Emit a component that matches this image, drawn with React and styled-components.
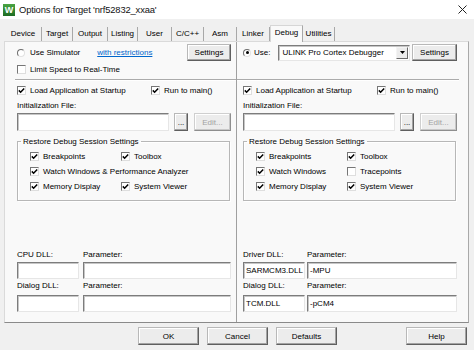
import React from 'react';
import styled, { createGlobalStyle } from 'styled-components';

const GlobalStyle = createGlobalStyle`
  html, body {
    margin: 0;
    padding: 0;
    background: #f0f0f0;
  }
  body {
    font-family: "Liberation Sans", Arial, sans-serif;
    font-size: 8px;
    color: #000;
  }
`;

const Window = styled.div`
  width: 474px;
  height: 350px;
  background: #f0f0f0;
  display: flex;
  flex-direction: column;
  overflow: hidden;
`;

const TitleBar = styled.div`
  flex: none;
  height: 19px;
  background: #fff;
  display: flex;
  align-items: center;
  padding: 0 7px 0 3px;
`;

const AppIcon = styled.div`
  width: 12px;
  height: 12px;
  margin-right: 4px;
  background: linear-gradient(#4aa544, #1d6b22);
  color: #fff;
  font-weight: bold;
  font-size: 9px;
  line-height: 12px;
  text-align: center;
`;

const Title = styled.span`
  font-size: 9.4px;
  letter-spacing: -0.15px;
  color: #111;
`;

const Close = styled.svg`
  margin-left: auto;
`;

const TabStrip = styled.div`
  flex: none;
  height: 22px;
  display: flex;
  align-items: flex-end;
  padding-left: 5px;
`;

const Tab = styled.div`
  width: ${({ w }) => w}px;
  height: ${({ active }) => (active ? 17 : 14)}px;
  box-sizing: border-box;
  display: flex;
  align-items: center;
  justify-content: center;
  padding-bottom: ${({ active }) => (active ? 3 : 1)}px;
  border-right: 1px solid ${({ active }) => (active ? '#a8a8a8' : '#a8a8a8')};
  background: ${({ active }) => (active ? '#f9f9f9' : 'transparent')};
  ${({ active }) =>
    active &&
    `
    border-left: 1px solid #d6d6d6;
    border-top: 1px solid #d6d6d6;
    margin-bottom: -1px;
    position: relative;
    z-index: 1;
  `}
`;

const Panel = styled.div`
  flex: none;
  margin-left: 4px;
  width: 465px;
  height: 282px;
  box-sizing: border-box;
  border: 1px solid #dadada;
  border-right-color: #a9a9a9;
  border-bottom-color: #8a8a8a;
  background: #f9f9f9;
  display: flex;
`;

const Column = styled.div`
  width: ${({ w }) => w}px;
  box-sizing: border-box;
  display: flex;
  flex-direction: column;
  padding: 2px ${({ pr }) => pr}px 10px ${({ pl }) => pl}px;
  ${({ divider }) => divider && 'border-left: 1px solid #a0a0a0;'}
`;

const Row = styled.div`
  display: flex;
  align-items: center;
  height: ${({ h }) => h}px;
  margin-top: ${({ mt }) => mt || 0}px;
  margin-right: ${({ mr }) => mr || 0}px;
  white-space: nowrap;
`;

const Separator = styled.div`
  margin: 5px ${({ mr }) => mr}px 0 ${({ ml }) => ml}px;
  border-top: 1px solid #ababab;
  border-bottom: 1px solid #fff;
`;

const Text = styled.span`
  margin-left: ${({ ml }) => ml || 0}px;
  color: ${({ dim }) => (dim ? '#a0a0a0' : '#000')};
  white-space: nowrap;
`;

const LinkText = styled.span`
  margin-left: 17px;
  color: #0066cc;
  text-decoration: underline;
`;

const Button = styled.div`
  width: ${({ w }) => w}px;
  height: ${({ h }) => h || 17}px;
  margin-left: ${({ ml }) => (ml === 'auto' ? 'auto' : `${ml || 0}px`)};
  box-sizing: border-box;
  flex: none;
  display: flex;
  align-items: center;
  justify-content: center;
  background: #ececec;
  border: 1px solid;
  border-color: #b8b8b8 #5f5f5f #5f5f5f #b8b8b8;
  box-shadow: inset -1px -1px 0 #a3a3a3, inset 1px 1px 0 #fff;
  color: ${({ disabled }) => (disabled ? '#a3a3a3' : '#000')};
  ${({ disabled }) =>
    disabled &&
    `
    border-color: #cfcfcf #8e8e8e #8e8e8e #cfcfcf;
    box-shadow: inset -1px -1px 0 #c8c8c8, inset 1px 1px 0 #fff;
  `}
`;

const Field = styled.div`
  height: ${({ h }) => h}px;
  box-sizing: border-box;
  flex: ${({ grow }) => (grow ? '1 1 auto' : 'none')};
  min-width: 0;
  display: flex;
  align-items: center;
  padding-left: 2px;
  background: #fff;
  border: 1px solid;
  border-color: #7c7c7c #e6e6e6 #e6e6e6 #7c7c7c;
  box-shadow: inset 1px 1px 0 #c6c6c6;
  white-space: nowrap;
  overflow: hidden;
`;

const Combo = styled(Field)`
  width: 132px;
  margin-left: 8px;
  padding-left: 3px;
  padding-right: 1px;
  justify-content: space-between;
`;

const ComboArrow = styled.div`
  width: 12px;
  height: 12px;
  box-sizing: border-box;
  display: flex;
  align-items: center;
  justify-content: center;
  background: #ececec;
  border: 1px solid;
  border-color: #f4f4f4 #6a6a6a #6a6a6a #f4f4f4;
`;

const Box = styled.span`
  width: 9px;
  height: 9px;
  box-sizing: border-box;
  flex: none;
  display: flex;
  align-items: center;
  justify-content: center;
  background: #fff;
  border: 1px solid;
  border-color: #767676 #dedede #dedede #767676;
`;

const RadioDot = styled.span`
  width: 8px;
  height: 8px;
  box-sizing: border-box;
  flex: none;
  border-radius: 50%;
  background: #fff;
  border: 1px solid;
  border-color: #6e6e6e #e2e2e2 #e2e2e2 #6e6e6e;
  display: flex;
  align-items: center;
  justify-content: center;
  &::after {
    content: '';
    width: 3px;
    height: 3px;
    border-radius: 50%;
    background: ${({ on }) => (on ? '#000' : 'transparent')};
  }
`;

const CheckItem = styled.div`
  display: flex;
  align-items: center;
  gap: 4px;
  width: ${({ w }) => (w ? `${w}px` : 'auto')};
  white-space: nowrap;
  ${({ span }) => span && 'grid-column: 1 / -1;'}
`;

const Group = styled.fieldset`
  margin: 6px 1px 0 0;
  padding: 0;
  min-width: 0;
  border: 1px solid #b7b7b7;
  box-shadow: inset 1px 1px 0 #fff, 1px 1px 0 #fff;
`;

const Legend = styled.legend`
  margin-left: 3px;
  padding: 0 2px;
  line-height: 9px;
`;

const GroupGrid = styled.div`
  display: grid;
  grid-template-columns: 91px 1fr;
  grid-auto-rows: 15px;
  align-items: center;
  padding: 3px 0 6px 12px;
`;

const DllGrid = styled.div`
  margin-top: auto;
  display: grid;
  grid-template-columns: 62px 1fr;
  grid-template-rows: 10px 17px 12px 17px;
  column-gap: ${({ gap }) => gap}px;
  row-gap: 2px;
`;

const DllLabel = styled.span`
  line-height: 10px;
  align-self: start;
  white-space: nowrap;
`;

const Footer = styled.div`
  flex: none;
  display: flex;
  align-items: center;
  gap: 8px;
  padding: 4px 7px 0 138px;
`;

const CheckMark = () => (
  <svg width="7" height="7" viewBox="0 0 7 7">
    <path d="M0.8 3.4 L2.6 5.2 L6.2 1.4" fill="none" stroke="#000" strokeWidth="1.5" />
  </svg>
);

const Check = ({ label, on, w, span }) => (
  <CheckItem w={w} span={span}>
    <Box>{on && <CheckMark />}</Box>
    <Text>{label}</Text>
  </CheckItem>
);

const tabs = [
  ['Device', 37],
  ['Target', 31],
  ['Output', 35],
  ['Listing', 30],
  ['User', 34],
  ['C/C++', 32],
  ['Asm', 33],
  ['Linker', 33],
  ['Debug', 33],
  ['Utilities', 32],
];

const sides = [
  {
    key: 'sim',
    w: 231,
    pl: 12,
    pr: 5,
    sep: [-2, -5],
    dllGap: 4,
    restore: [
      ['Breakpoints', true],
      ['Toolbox', true],
      ['Watch Windows & Performance Analyzer', true, true],
      ['Memory Display', true],
      ['System Viewer', true],
    ],
    dll: ['CPU DLL:', '', 'Dialog DLL:', ''],
    params: ['', ''],
  },
  {
    key: 'use',
    w: 232,
    pl: 6,
    pr: 11,
    divider: true,
    sep: [-6, -2],
    dllGap: 2,
    restore: [
      ['Breakpoints', true],
      ['Toolbox', true],
      ['Watch Windows', true],
      ['Tracepoints', false],
      ['Memory Display', true],
      ['System Viewer', true],
    ],
    dll: ['Driver DLL:', 'SARMCM3.DLL', 'Dialog DLL:', 'TCM.DLL'],
    params: ['-MPU', '-pCM4'],
  },
];

const TopRow = ({ side }) =>
  side.key === 'sim' ? (
    <Row h={17}>
      <RadioDot />
      <Text ml={5}>Use Simulator</Text>
      <LinkText>with restrictions</LinkText>
      <Button w={44} ml="auto">Settings</Button>
    </Row>
  ) : (
    <Row h={17}>
      <RadioDot on />
      <Text ml={3}>Use:</Text>
      <Combo h={16}>
        <span>ULINK Pro Cortex Debugger</span>
        <ComboArrow>
          <svg width="5" height="3" viewBox="0 0 5 3">
            <path d="M0 0 H5 L2.5 3 Z" fill="#000" />
          </svg>
        </ComboArrow>
      </Combo>
      <Button w={45} ml="auto">Settings</Button>
    </Row>
  );

const Side = ({ side }) => (
  <Column w={side.w} pl={side.pl} pr={side.pr} divider={side.divider}>
    <TopRow side={side} />
    <Row h={10} mt={3}>
      {side.key === 'sim' && <Check label="Limit Speed to Real-Time" />}
    </Row>
    <Separator ml={side.sep[0]} mr={side.sep[1]} />
    <Row h={11} mt={4}>
      <Check label="Load Application at Startup" on w={134} />
      <Check label="Run to main()" on />
    </Row>
    <Row h={10} mt={4}>
      <Text>Initialization File:</Text>
    </Row>
    <Row h={18} mt={3}>
      <Field h={18} grow />
      <Button w={14} h={18} ml={5}>...</Button>
      <Button w={37} h={18} ml={6} disabled>Edit...</Button>
    </Row>
    <Group>
      <Legend>Restore Debug Session Settings</Legend>
      <GroupGrid>
        {side.restore.map(([label, on, span]) => (
          <Check key={label} label={label} on={on} span={span} />
        ))}
      </GroupGrid>
    </Group>
    <DllGrid gap={side.dllGap}>
      <DllLabel>{side.dll[0]}</DllLabel>
      <DllLabel>Parameter:</DllLabel>
      <Field h={17}>{side.dll[1]}</Field>
      <Field h={17}>{side.params[0]}</Field>
      <DllLabel>{side.dll[2]}</DllLabel>
      <DllLabel>Parameter:</DllLabel>
      <Field h={17}>{side.dll[3]}</Field>
      <Field h={17}>{side.params[1]}</Field>
    </DllGrid>
  </Column>
);

const App = () => (
  <>
    <GlobalStyle />
    <Window>
      <TitleBar>
        <AppIcon>W</AppIcon>
        <Title>Options for Target 'nrf52832_xxaa'</Title>
        <Close width="9" height="9" viewBox="0 0 9 9">
          <path d="M0.5 0.5 L8.5 8.5 M8.5 0.5 L0.5 8.5" stroke="#222" strokeWidth="1" />
        </Close>
      </TitleBar>
      <TabStrip>
        {tabs.map(([name, w]) => (
          <Tab key={name} w={w} active={name === 'Debug'}>
            {name}
          </Tab>
        ))}
      </TabStrip>
      <Panel>
        {sides.map((side) => (
          <Side key={side.key} side={side} />
        ))}
      </Panel>
      <Footer>
        <Button w={61} h={18}>OK</Button>
        <Button w={61} h={18}>Cancel</Button>
        <Button w={61} h={18}>Defaults</Button>
        <Button w={61} h={18} ml="auto">Help</Button>
      </Footer>
    </Window>
  </>
);

export default App;
